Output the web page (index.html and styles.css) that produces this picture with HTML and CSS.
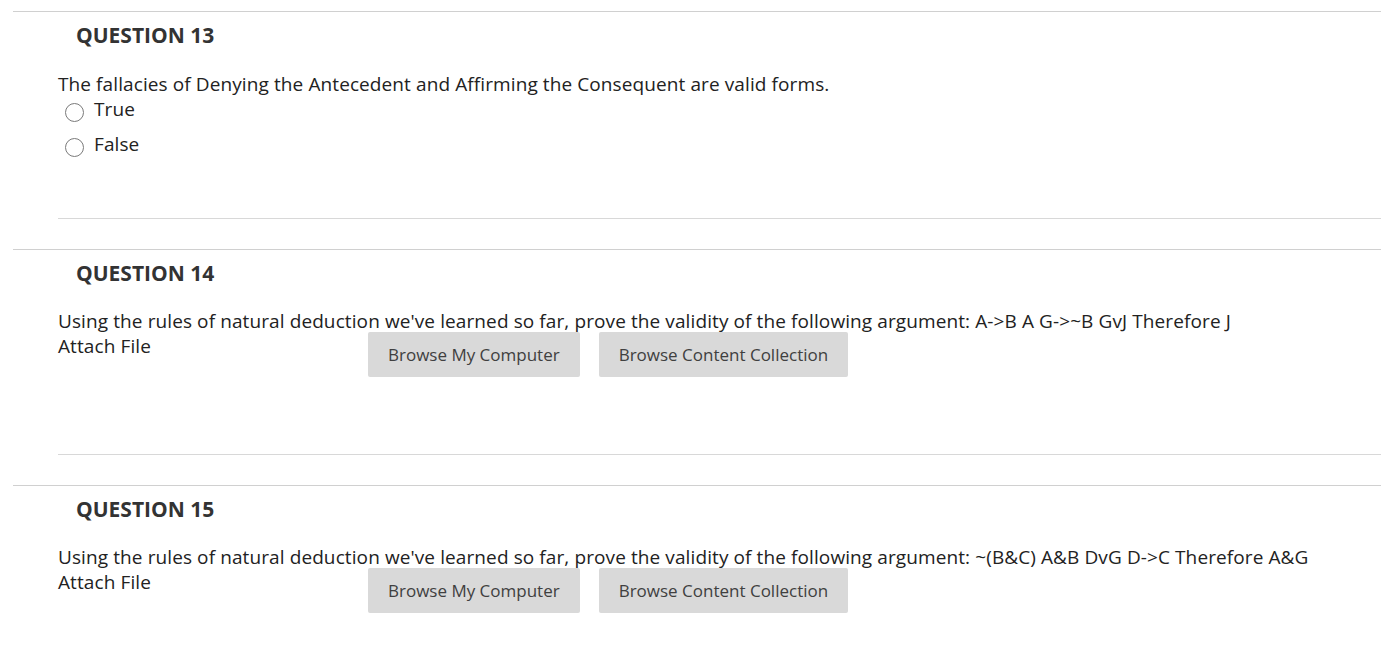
FILE: index.html
```html
<!DOCTYPE html>
<html>
<head>
<meta charset="utf-8">
<link rel="stylesheet" href="styles.css">
</head>
<body>
<div class="page">
  <section class="question">
    <h3 class="q-title">QUESTION 13</h3>
    <div class="q-body">
      <p class="q-text">The fallacies of Denying the Antecedent and Affirming the Consequent are valid forms.</p>
      <ul class="options">
        <li class="option"><span class="radio"></span><span>True</span></li>
        <li class="option"><span class="radio"></span><span>False</span></li>
      </ul>
    </div>
  </section>
  <section class="question">
    <h3 class="q-title">QUESTION 14</h3>
    <div class="q-body q-body-file">
      <p class="q-text">Using the rules of natural deduction we've learned so far, prove the validity of the following argument: A-&gt;B A G-&gt;~B GvJ Therefore J</p>
      <div class="attach-row">
        <span class="attach-label">Attach File</span>
        <div class="buttons">
          <button class="btn">Browse My Computer</button>
          <button class="btn">Browse Content Collection</button>
        </div>
      </div>
    </div>
  </section>
  <section class="question">
    <h3 class="q-title">QUESTION 15</h3>
    <div class="q-body q-body-file">
      <p class="q-text">Using the rules of natural deduction we've learned so far, prove the validity of the following argument: ~(B&amp;C) A&amp;B DvG D-&gt;C Therefore A&amp;G</p>
      <div class="attach-row">
        <span class="attach-label">Attach File</span>
        <div class="buttons">
          <button class="btn">Browse My Computer</button>
          <button class="btn">Browse Content Collection</button>
        </div>
      </div>
    </div>
  </section>
</div>
</body>
</html>
```
FILE: styles.css
```css
html, body {
  margin: 0;
  padding: 0;
  background: #ffffff;
}
body {
  font-family: "Open Sans", "Noto Sans", sans-serif;
  color: #222222;
}
.page {
  padding-top: 11px;
  display: flex;
  flex-direction: column;
  gap: 30px;
}
.question {
  margin-left: 13px;
  border-top: 1px solid #d0d0d0;
}
.q-title {
  margin: 0;
  padding: 9px 0 0 63px;
  font-size: 21px;
  line-height: 28px;
  font-weight: 700;
  color: #333333;
}
.q-body {
  margin-left: 45px;
  padding-top: 23px;
  padding-bottom: 61px;
  border-bottom: 1px solid #d8d8d8;
}
.q-body-file {
  padding-top: 22px;
  padding-bottom: 77px;
}
.q-text {
  margin: 0;
  font-size: 19px;
  line-height: 25px;
  letter-spacing: 0.1px;
}
.options {
  list-style: none;
  margin: 0;
  padding: 0;
  display: flex;
  flex-direction: column;
  gap: 10px;
}
.option {
  display: flex;
  align-items: flex-start;
  font-size: 19px;
  line-height: 25px;
  letter-spacing: 0.1px;
}
.radio {
  box-sizing: border-box;
  width: 19px;
  height: 19px;
  margin: 6px 10px 0 7px;
  border: 1px solid #7a7a7a;
  border-radius: 50%;
  background: #ffffff;
}
.attach-row {
  display: flex;
  align-items: flex-start;
}
.attach-label {
  width: 310px;
  font-size: 19px;
  line-height: 25px;
  letter-spacing: 0.1px;
}
.buttons {
  display: flex;
  gap: 19px;
  margin-top: -2px;
}
.btn {
  font-family: "Open Sans", "Noto Sans", sans-serif;
  font-size: 17px;
  color: #404040;
  background: #d9d9d9;
  border: none;
  border-radius: 2px;
  height: 45px;
  padding: 0 20px;
}
```
